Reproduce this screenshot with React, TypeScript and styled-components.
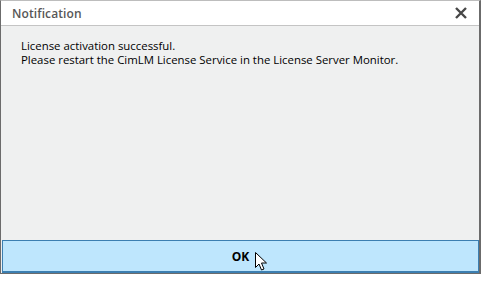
import React, { ReactElement } from 'react'
import styled, { createGlobalStyle } from 'styled-components'

const GlobalStyle = createGlobalStyle`
  html, body {
    margin: 0;
    padding: 0;
    background: #FFFFFF;
  }
`

const Dialog = styled.div`
  width: 481px;
  height: 274px;
  box-sizing: border-box;
  display: flex;
  flex-direction: column;
  border: solid 1px #6b6b6b;
  border-right-width: 2px;
  border-top-color: #bdbdbd;
  background-color: #eff0f0;
  font-family: 'Open Sans', 'Noto Sans', sans-serif;
`

const TitleBar = styled.div`
  height: 24px;
  display: flex;
  align-items: center;
  justify-content: space-between;
  padding: 0 10px 0 11px;
  background-color: #FFFFFF;
  border-bottom: solid 1px #c4c4c4;
  flex-shrink: 0;
`

const Title = styled.div`
  color: #575757;
  font-size: 12px;
  font-weight: 600;
  letter-spacing: 0.1px;
`

const CloseButton = styled.div`
  width: 16px;
  height: 16px;
  display: flex;
  align-items: center;
  justify-content: center;
`

const Body = styled.div`
  flex-grow: 1;
  padding: 13px 20px;
  color: #000000;
  font-size: 11.4px;
  line-height: 14px;
`

const ButtonRow = styled.div`
  padding: 0 0 0 1px;
  flex-shrink: 0;
`

const OkButton = styled.div`
  position: relative;
  height: 33px;
  box-sizing: border-box;
  display: flex;
  align-items: center;
  justify-content: center;
  background-color: #bee6fd;
  border: solid 1px #3c7fb1;
  border-bottom-width: 2px;
  color: #000000;
  font-size: 12px;
  font-weight: 700;
`

const Cursor = styled.svg`
  position: absolute;
  left: 252px;
  top: 11px;
`

function App(): ReactElement {
  return (<>
    <GlobalStyle />
    <Dialog>
      <TitleBar>
        <Title>Notification</Title>
        <CloseButton>
          <svg width="14" height="14" viewBox="0 0 14 14">
            <path d="M2 2 L12 12 M12 2 L2 12" stroke="#474747" strokeWidth="2.4" />
          </svg>
        </CloseButton>
      </TitleBar>
      <Body>
        License activation successful.<br />
        Please restart the CimLM License Service in the License Server Monitor.
      </Body>
      <ButtonRow>
        <OkButton>
          OK
          <Cursor width="13" height="20" viewBox="0 0 13 20">
            <path d="M0.5 0.5 L0.5 15.5 L4 12 L6.5 18 L9 17 L6.5 11 L11.5 11 Z" fill="#FFFFFF" stroke="#000000" strokeWidth="1" strokeLinejoin="miter" />
          </Cursor>
        </OkButton>
      </ButtonRow>
    </Dialog>
  </>)
}

export default App
